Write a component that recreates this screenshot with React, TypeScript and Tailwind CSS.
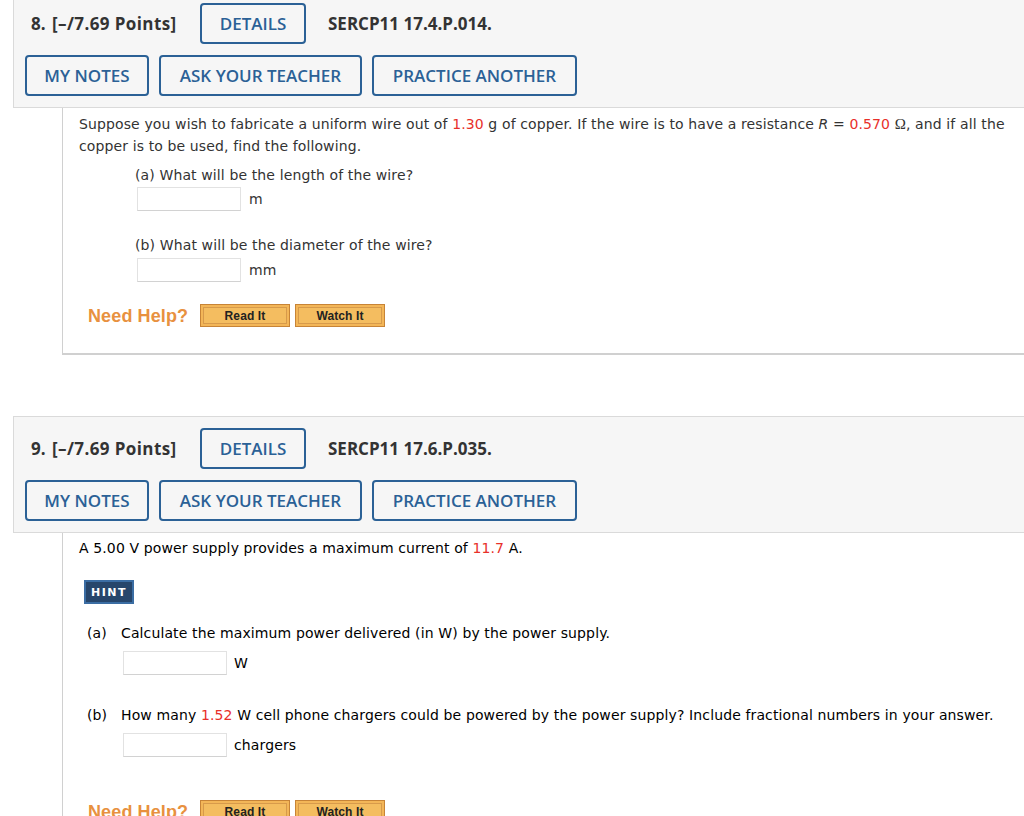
import React from "react";

const RED = "text-[#e8302a]";

function HeaderPanel({ num, code }: { num: string; code: string }) {
  const btn =
    "flex items-center justify-center h-[41px] border-2 border-[#2b6196] rounded-[4px] text-[#2b6196] text-[17px] font-semibold bg-transparent";
  return (
    <div
      className="border-l border-t border-b border-[#dadada] bg-[#f6f6f6] pl-[11px] pt-[11px] pb-[11px]"
      style={{ fontFamily: '"Open Sans", sans-serif' }}
    >
      <div className="flex items-center h-[41px]">
        <span className="ml-[6px] w-[21px] shrink-0 text-[17px] font-bold text-[#333]">{num}</span>
        <span className="text-[17px] font-bold text-[#333] w-[148px] shrink-0 tracking-[0.4px]">[–/7.69 Points]</span>
        <div className={btn + " w-[106px]"}>DETAILS</div>
        <span className="ml-[22px] text-[17px] font-bold text-[#333]">{code}</span>
      </div>
      <div className="flex gap-[10px] mt-[11px]">
        <div className={btn + " w-[124px]"}>MY NOTES</div>
        <div className={btn + " w-[203px]"}>ASK YOUR TEACHER</div>
        <div className={btn + " w-[205px]"}>PRACTICE ANOTHER</div>
      </div>
    </div>
  );
}

function Input() {
  return <div className="w-[104px] h-[24px] border border-[#e2e2e2] border-b-[#d2d2d2] bg-white" />;
}

function HelpButton({ label, w }: { label: string; w: string }) {
  return (
    <div className={"h-[23px] border border-[#c78437] bg-[#f3b658] p-[2px] " + w}>
      <div
        className="h-full border border-[#d79a4b] bg-[#f4bd60] flex items-center justify-center text-[12px] font-bold text-[#222]"
        style={{ fontFamily: '"Liberation Sans", Arial, sans-serif' }}
      >
        {label}
      </div>
    </div>
  );
}

function NeedHelp() {
  return (
    <div className="flex items-center">
      <span
        className="text-[18px] font-bold text-[#e8913f] w-[112px]"
        style={{ fontFamily: '"Liberation Sans", Arial, sans-serif' }}
      >
        Need Help?
      </span>
      <HelpButton label="Read It" w="w-[90px]" />
      <div className="w-[5px]" />
      <HelpButton label="Watch It" w="w-[90px]" />
    </div>
  );
}

export default function App() {
  const body = { fontFamily: '"DejaVu Sans", Verdana, sans-serif' };
  const omega = { fontFamily: '"Liberation Serif", "Times New Roman", serif' };
  return (
    <div className="w-[1024px] h-[816px] overflow-hidden bg-white">
      <div className="ml-[13px] mt-[-9px]">
        <HeaderPanel num="8." code="SERCP11 17.4.P.014." />
        <div
          className="ml-[49px] h-[247px] border-l border-b-2 border-[#d0d0d0] pl-[16px] pr-[9px] pt-[5px] text-[14px] tracking-[0.12px] leading-[22px] text-[#333]"
          style={body}
        >
          <p>
            Suppose you wish to fabricate a uniform wire out of <span className={RED}>1.30</span> g of copper. If the
            wire is to have a resistance <i>R</i> = <span className={RED}>0.570</span>{" "}
            <span className="text-[15px]" style={omega}>Ω</span>, and if all the copper is to be used, find the
            following.
          </p>
          <div className="ml-[56px] mt-[7px]">
            <p>(a) What will be the length of the wire?</p>
            <div className="flex items-center ml-[2px] mt-[1px]">
              <Input />
              <span className="ml-[8px]">m</span>
            </div>
            <p className="mt-[23px]">(b) What will be the diameter of the wire?</p>
            <div className="flex items-center ml-[2px] mt-[2px]">
              <Input />
              <span className="ml-[8px]">mm</span>
            </div>
          </div>
          <div className="ml-[9px] mt-[22px]">
            <NeedHelp />
          </div>
        </div>

        <div className="h-[61px]" />
        <HeaderPanel num="9." code="SERCP11 17.6.P.035." />
        <div
          className="ml-[49px] h-[400px] border-l border-[#d0d0d0] pl-[16px] pt-[4px] text-[14px] tracking-[0.12px] leading-[22px] text-black"
          style={body}
        >
          <p>
            A 5.00 V power supply provides a maximum current of <span className={RED}>11.7</span> A.
          </p>
          <div className="ml-[5px] mt-[21px] inline-flex h-[24px] px-[5px] items-center bg-[#27466b] border-2 border-[#3b6da3] text-white text-[11px] font-bold tracking-[1.5px] leading-none">
            HINT
          </div>
          <div className="ml-[8px] mt-[18px] flex">
            <span className="w-[34px]">(a)</span>
            <span>Calculate the maximum power delivered (in W) by the power supply.</span>
          </div>
          <div className="flex items-center ml-[44px] mt-[7px]">
            <Input />
            <span className="ml-[7px]">W</span>
          </div>
          <div className="ml-[8px] mt-[29px] flex">
            <span className="w-[34px]">(b)</span>
            <span>
              How many <span className={RED}>1.52</span> W cell phone chargers could be powered by the power supply?
              Include fractional numbers in your answer.
            </span>
          </div>
          <div className="flex items-center ml-[44px] mt-[7px]">
            <Input />
            <span className="ml-[7px]">chargers</span>
          </div>
          <div className="ml-[9px] mt-[43px]">
            <NeedHelp />
          </div>
        </div>
      </div>
    </div>
  );
}
